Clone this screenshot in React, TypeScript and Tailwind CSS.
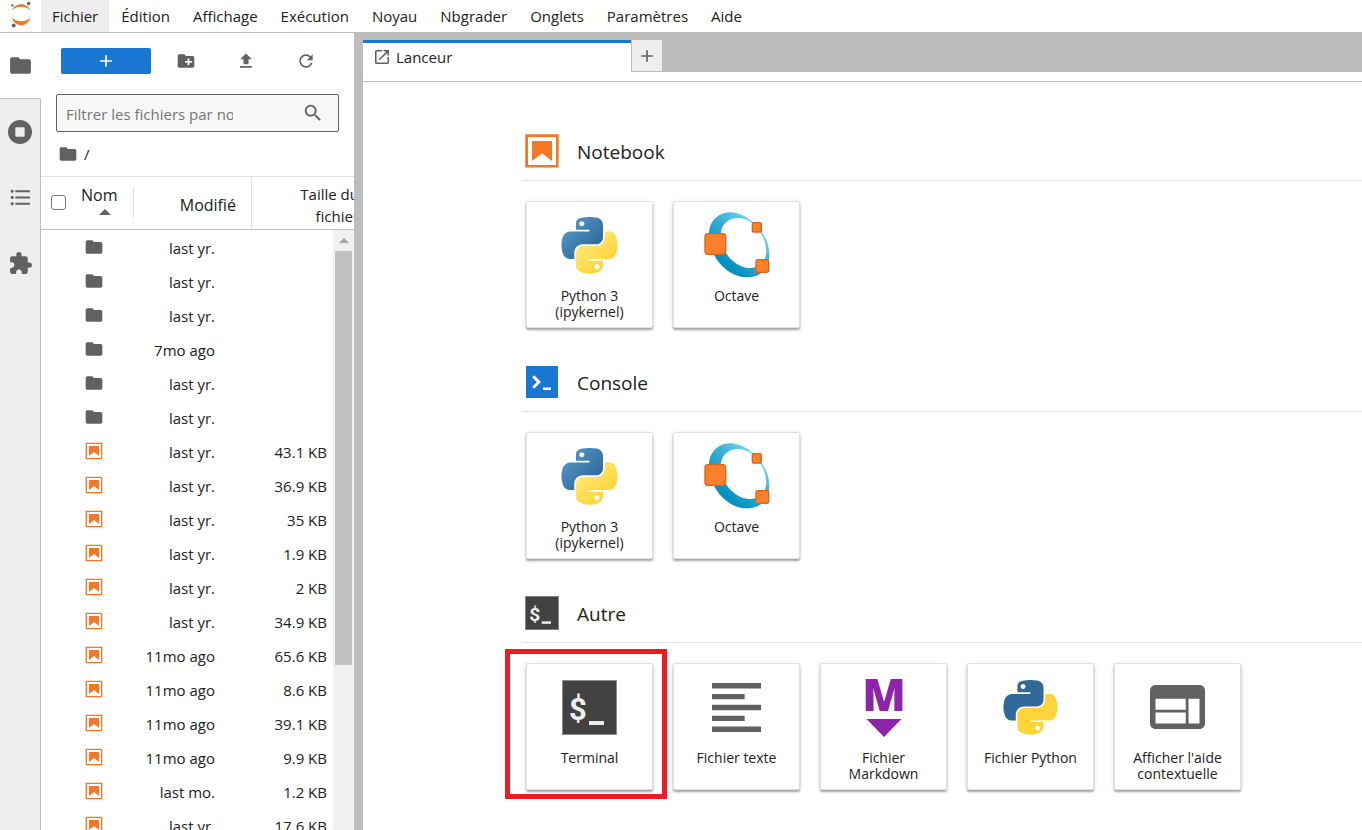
import type { ReactNode } from "react"
import {
  MdAdd,
  MdCreateNewFolder,
  MdExtension,
  MdFileUpload,
  MdFolder,
  MdFormatListBulleted,
  MdRefresh,
  MdSearch,
} from "react-icons/md"

const menus = [
  "Fichier",
  "Édition",
  "Affichage",
  "Exécution",
  "Noyau",
  "Nbgrader",
  "Onglets",
  "Paramètres",
  "Aide",
]

type FileRow = { kind: "folder" | "notebook"; modified: string; size?: string }

const files: FileRow[] = [
  { kind: "folder", modified: "last yr." },
  { kind: "folder", modified: "last yr." },
  { kind: "folder", modified: "last yr." },
  { kind: "folder", modified: "7mo ago" },
  { kind: "folder", modified: "last yr." },
  { kind: "folder", modified: "last yr." },
  { kind: "notebook", modified: "last yr.", size: "43.1 KB" },
  { kind: "notebook", modified: "last yr.", size: "36.9 KB" },
  { kind: "notebook", modified: "last yr.", size: "35 KB" },
  { kind: "notebook", modified: "last yr.", size: "1.9 KB" },
  { kind: "notebook", modified: "last yr.", size: "2 KB" },
  { kind: "notebook", modified: "last yr.", size: "34.9 KB" },
  { kind: "notebook", modified: "11mo ago", size: "65.6 KB" },
  { kind: "notebook", modified: "11mo ago", size: "8.6 KB" },
  { kind: "notebook", modified: "11mo ago", size: "39.1 KB" },
  { kind: "notebook", modified: "11mo ago", size: "9.9 KB" },
  { kind: "notebook", modified: "last mo.", size: "1.2 KB" },
  { kind: "notebook", modified: "last yr.", size: "17.6 KB" },
]

function JupyterLogo() {
  return (
    <svg viewBox="0 0 60 80" className="h-[27px] w-5" aria-hidden="true">
      <path d="M3 28C10 3 51 3 58 28C46 13 15 13 3 28z" fill="#f37726" />
      <path d="M3 49C15 64 46 64 58 49C51 80 10 80 3 49z" fill="#f37726" />
      <circle cx="4" cy="13" r="3.5" fill="#616161" />
      <circle cx="53" cy="7" r="5" fill="#616161" />
      <circle cx="8" cy="73" r="6" fill="#616161" />
    </svg>
  )
}

function NotebookIcon({ className }: { className: string }) {
  return (
    <svg viewBox="0 0 22 22" className={className} fill="#f37726" aria-hidden="true">
      <path d="M18.7 3.3v15.4H3.3V3.3h15.4m1.5-1.5H1.8v18.3h18.3l.1-18.3z" />
      <path d="M16.5 16.5l-5.4-4.3-5.6 4.3v-11h11z" />
    </svg>
  )
}

function ConsoleIcon() {
  return (
    <svg viewBox="0 0 200 200" className="size-10" aria-hidden="true">
      <path d="M20 20h160v160H20z" fill="#1976d2" />
      <path
        d="M105 127.3h40v12.8h-40zM51.1 77L74 99.9l-23.3 23.3 10.5 10.5 23.3-23.3L95 99.9 84.5 89.4 61.6 66.5z"
        fill="#fff"
      />
    </svg>
  )
}

function TerminalIcon({ className }: { className: string }) {
  return (
    <svg viewBox="0 0 55 55" className={className} aria-hidden="true">
      <path d="M.5 .5h54v54H.5z" fill="#424242" stroke="#8a8a8a" />
      <text
        x="7"
        y="40"
        fontSize="31"
        fontWeight="700"
        fontFamily="Roboto, sans-serif"
        fill="#eee"
      >
        $
      </text>
      <path d="M27 41h15v4H27z" fill="#eee" />
    </svg>
  )
}

function PythonIcon({ className, flat }: { className: string; flat?: boolean }) {
  return (
    <svg viewBox="13 2 102 104" className={className} aria-hidden="true">
      <defs>
        <linearGradient id="pyBlue" x1="0" y1="0" x2="0.8" y2="0.8">
          <stop offset="0" stopColor="#5a9fd4" />
          <stop offset="1" stopColor="#306998" />
        </linearGradient>
        <linearGradient id="pyYellow" x1="0.2" y1="0.2" x2="0.7" y2="0.8">
          <stop offset="0" stopColor="#ffe873" />
          <stop offset="1" stopColor="#ffd43b" />
        </linearGradient>
      </defs>
      <path
        fill={flat ? "#306998" : "url(#pyBlue)"}
        d="M63.391 1.988c-4.222.02-8.252.379-11.8 1.007-10.45 1.846-12.346 5.71-12.346 12.837v9.411h24.693v3.137H29.977c-7.176 0-13.46 4.313-15.426 12.521-2.268 9.405-2.368 15.275 0 25.096 1.755 7.311 5.947 12.519 13.124 12.519h8.491V67.234c0-8.151 7.051-15.34 15.426-15.34h24.665c6.866 0 12.346-5.654 12.346-12.548V15.833c0-6.693-5.646-11.72-12.346-12.837-4.244-.706-8.645-1.027-12.866-1.008zM50.037 9.557c2.55 0 4.634 2.117 4.634 4.721 0 2.593-2.083 4.69-4.634 4.69-2.56 0-4.633-2.097-4.633-4.69-.001-2.604 2.073-4.721 4.633-4.721z"
      />
      <path
        fill={flat ? "#ffd43b" : "url(#pyYellow)"}
        d="M91.682 28.38v10.966c0 8.5-7.208 15.655-15.426 15.655H51.591c-6.756 0-12.346 5.783-12.346 12.549v23.515c0 6.691 5.818 10.628 12.346 12.547 7.816 2.297 16.221 2.713 24.665 0 6.216-1.801 12.346-5.423 12.346-12.547v-9.412H63.938v-3.138h37.012c7.176 0 9.852-5.005 12.348-12.519 2.578-7.735 2.467-15.174 0-25.096-1.774-7.145-5.161-12.521-12.348-12.521h-9.268zM77.809 87.927c2.561 0 4.634 2.097 4.634 4.692 0 2.602-2.074 4.719-4.634 4.719-2.55 0-4.633-2.117-4.633-4.719 0-2.595 2.083-4.692 4.633-4.692z"
      />
    </svg>
  )
}

function OctaveIcon() {
  return (
    <svg viewBox="0 0 198 198" className="size-[66px]" aria-hidden="true">
      <defs>
        <linearGradient id="octRing" x1="0.9" y1="0.1" x2="0.3" y2="0.8">
          <stop offset="0" stopColor="#8be4f5" />
          <stop offset="0.5" stopColor="#3bb0d3" />
          <stop offset="1" stopColor="#0590c0" />
        </linearGradient>
      </defs>
      <path
        fillRule="evenodd"
        fill="url(#octRing)"
        d="M80 1C128 1 196 60 196 128C196 170 170 196 130 196C70 196 15 135 15 68C15 25 45 1 80 1zM105 18C68 18 50 40 50 72C50 120 95 168 136 168C166 168 187 150 187 118C187 66 142 18 105 18z"
      />
      <g fill="#ff7f2a" stroke="#d96416" strokeWidth="4">
        <rect x="3" y="65" width="62" height="62" rx="9" />
        <rect x="145" y="32" width="27" height="28" rx="4" />
        <rect x="156" y="143" width="38" height="38" rx="6" />
      </g>
    </svg>
  )
}

function TextIcon() {
  return (
    <svg viewBox="3 3 18 18" className="size-[49px]" fill="#616161" aria-hidden="true">
      <path d="M15 15H3v2h12v-2zm0-8H3v2h12V7zM3 13h18v-2H3v2zm0 8h18v-2H3v2zM3 3v2h18V3H3z" />
    </svg>
  )
}

function MarkdownIcon() {
  return (
    <svg viewBox="0 0 40 60" className="h-[60px] w-10" fill="#8e24aa" aria-hidden="true">
      <text
        x="20"
        y="34"
        textAnchor="middle"
        fontSize="45"
        fontWeight="800"
        fontFamily="'Open Sans', sans-serif"
      >
        M
      </text>
      <path d="M2.500 42h35L20 60z" />
    </svg>
  )
}

function HelpIcon() {
  return (
    <svg viewBox="2 4 20 16" className="h-11 w-[55px]" fill="#616161" aria-hidden="true">
      <path d="M20 4H4c-1.100 0-1.990.9-1.990 2L2 18c0 1.100.9 2 2 2h16c1.100 0 2-.9 2-2V6c0-1.100-.9-2-2-2zm-5 14H4v-4h11v4zm0-5H4V9h11v4zm5 5h-4V9h4v9z" />
    </svg>
  )
}

function LauncherIcon() {
  return (
    <svg viewBox="3 3 18 18" className="mb-0.5 size-[14px]" fill="#616161" aria-hidden="true">
      <path d="M19 19H5V5h7V3H5a2 2 0 00-2 2v14a2 2 0 002 2h14c1.100 0 2-.9 2-2v-7h-2v7zM14 3v2h3.590l-9.830 9.830 1.410 1.410L19 6.410V10h2V3h-7z" />
    </svg>
  )
}

function RunningIcon() {
  return (
    <svg viewBox="8 8 496 496" className="size-6" fill="currentColor" aria-hidden="true">
      <path d="M256 8C119 8 8 119 8 256s111 248 248 248 248-111 248-248S393 8 256 8zm96 328c0 8.800-7.200 16-16 16H176c-8.800 0-16-7.200-16-16V176c0-8.800 7.200-16 16-16h160c8.800 0 16 7.200 16 16v160z" />
    </svg>
  )
}

function MenuBar() {
  return (
    <header className="flex h-[33px] shrink-0 border-b border-[#bdbdbd] bg-white">
      <div className="flex w-[41px] shrink-0 justify-center pt-px">
        <JupyterLogo />
      </div>
      <nav className="flex gap-px">
        {menus.map((menu, i) => (
          <button
            key={menu}
            className={`px-[11px] ${i === 0 ? "bg-[#eeeeee]" : "hover:bg-[#eeeeee]"}`}
          >
            {menu}
          </button>
        ))}
      </nav>
    </header>
  )
}

function ActivityBar() {
  const tab = "flex h-[66px] w-full items-center justify-center border-r pb-px"
  return (
    <aside className="flex w-[41px] shrink-0 flex-col bg-[#eeeeee] text-[#616161]">
      <button aria-label="Fichiers" className={`${tab} border-b border-r-white border-b-[#bdbdbd] bg-white`}>
        <MdFolder className="size-[25px]" />
      </button>
      <button aria-label="Noyaux actifs" className={`${tab} border-[#bdbdbd]`}>
        <RunningIcon />
      </button>
      <button aria-label="Table des matières" className={`${tab} border-[#bdbdbd]`}>
        <MdFormatListBulleted className="size-[25px]" />
      </button>
      <button aria-label="Extensions" className={`${tab} border-[#bdbdbd]`}>
        <MdExtension className="size-[25px]" />
      </button>
      <div className="flex-1 border-r border-[#bdbdbd]" />
    </aside>
  )
}

function FileTable() {
  return (
    <div className="relative min-h-0 flex-1 overflow-hidden border-t border-[#e0e0e0]">
      <table className="w-full table-fixed border-separate border-spacing-0">
        <colgroup>
          <col className="w-[93px]" />
          <col className="w-[118px]" />
          <col />
        </colgroup>
        <thead>
          <tr className="h-[53px]">
            <th className="border-b border-[#bdbdbd] p-0 font-medium">
              <div className="flex h-[30px] items-center border-r border-[#e0e0e0] pl-2.5">
                <input
                  type="checkbox"
                  aria-label="Tout sélectionner"
                  className="mb-0.5 size-[15px] appearance-none rounded-[3px] border border-[#767676] bg-white"
                />
                <button className="flex flex-col items-center pb-1.5 pl-[15px] text-base leading-5">
                  <span>Nom</span>
                  <svg viewBox="0 0 12 6" className="mt-1 ml-3 h-1.5 w-3" fill="#616161" aria-hidden="true">
                    <path d="M0 6L6 0l6 6z" />
                  </svg>
                </button>
              </div>
            </th>
            <th className="border-r border-b border-r-[#e0e0e0] border-b-[#bdbdbd] p-0 pt-1 pr-[15px] text-right text-base font-medium">
              Modifié
            </th>
            <th className="border-b border-[#bdbdbd] p-0 pt-1 font-medium">
              <div className="w-[107px] text-right leading-[22px]">
                Taille du
                <br />
                fichier
              </div>
            </th>
          </tr>
        </thead>
        <tbody>
          {files.map((file, i) => (
            <tr key={i} className="h-[34px]">
              <td className="p-0 pl-[43px] text-[#616161]">
                {file.kind === "folder" ? (
                  <MdFolder className="size-5" />
                ) : (
                  <NotebookIcon className="size-5" />
                )}
              </td>
              <td className="p-0 pt-0.5 pr-[37px] text-right">{file.modified}</td>
              <td className="p-0 pt-0.5 pr-[27px] text-right">{file.size}</td>
            </tr>
          ))}
        </tbody>
      </table>
      {/* Scrollbar over the right edge of the rows */}
      <div className="absolute top-[53px] right-0 bottom-0 flex w-[21px] flex-col items-center bg-[#f1f1f1]">
        <div className="flex h-[21px] shrink-0 items-center">
          <svg viewBox="0 0 10 5" className="h-[5px] w-2.5" fill="#a3a3a3" aria-hidden="true">
            <path d="M0 5l5-5 5 5z" />
          </svg>
        </div>
        <div className="h-[69%] w-[17px] bg-[#c1c1c1]" />
      </div>
    </div>
  )
}

function FileBrowser() {
  const tool = "flex w-[60px] items-center justify-center"
  return (
    <section className="flex w-[313px] shrink-0 flex-col bg-white text-[#212121]">
      <div className="mt-[15px] flex h-[26px] pl-5 text-[#616161]">
        <button
          aria-label="Nouveau lanceur"
          className="mr-[5px] flex w-[90px] items-center justify-center rounded-xs bg-[#1976d2] text-white"
        >
          <MdAdd className="size-5" />
        </button>
        <button aria-label="Nouveau dossier" className={tool}>
          <MdCreateNewFolder className="size-5" />
        </button>
        <button aria-label="Téléverser" className={tool}>
          <MdFileUpload className="size-5" />
        </button>
        <button aria-label="Rafraîchir" className={tool}>
          <MdRefresh className="size-5" />
        </button>
      </div>
      <label className="mx-[15px] mt-5 flex h-[38px] items-center rounded-xs border border-[#616161] bg-[#f7f7f7] pl-[9px]">
        <input
          type="text"
          aria-label="Filtrer les fichiers par nom"
          placeholder="Filtrer les fichiers par nom"
          className="w-[167px] bg-transparent pt-0.5 outline-none placeholder:text-[#757575]"
        />
        <MdSearch className="mr-[14px] ml-auto size-[22px] text-[#616161]" />
      </label>
      <div className="flex h-11 items-center gap-1.5 pl-[17px]">
        <MdFolder className="size-5 text-[#616161]" />
        <a href="#">/</a>
      </div>
      <FileTable />
    </section>
  )
}

type CardProps = { icon: ReactNode; label: string; marked?: boolean }

function Card({ icon, label, marked }: CardProps) {
  return (
    <div className="relative">
      <button className="flex size-[127px] flex-col items-center rounded-xs border border-[#e0e0e0] bg-white shadow-[0_2px_2px_rgba(0,0,0,0.3),0_1px_5px_rgba(0,0,0,0.12)]">
        <span className="flex h-[86px] shrink-0 items-center justify-center">{icon}</span>
        <span className="w-[104px] text-sm leading-4">{label}</span>
      </button>
      {marked && (
        <div className="pointer-events-none absolute -top-3.5 -left-[21px] h-[150px] w-[162px] border-5 border-[#ed1c24]" />
      )}
    </div>
  )
}

type SectionProps = { title: string; icon: ReactNode; cards: CardProps[] }

function Section({ title, icon, cards }: SectionProps) {
  return (
    <section className="mb-[25px]">
      <h2 className="flex h-[59px] items-center border-b border-[#e0e0e0] text-[19px]">
        <span className="flex w-10 items-center justify-center">{icon}</span>
        <span className="pt-0.5 pl-[15px]">{title}</span>
      </h2>
      <div className="flex flex-wrap gap-5 pt-5 pl-1">
        {cards.map((card) => (
          <Card key={card.label} {...card} />
        ))}
      </div>
    </section>
  )
}

const kernels: CardProps[] = [
  { icon: <PythonIcon className="size-[57px]" />, label: "Python 3 (ipykernel)" },
  { icon: <OctaveIcon />, label: "Octave" },
]

const others: CardProps[] = [
  { icon: <TerminalIcon className="size-[55px]" />, label: "Terminal", marked: true },
  { icon: <TextIcon />, label: "Fichier texte" },
  { icon: <MarkdownIcon />, label: "Fichier Markdown" },
  { icon: <PythonIcon flat className="size-[55px]" />, label: "Fichier Python" },
  { icon: <HelpIcon />, label: "Afficher l'aide contextuelle" },
]

function Launcher() {
  return (
    <main className="flex min-w-0 flex-1 flex-col bg-white">
      <div className="flex h-[39px] shrink-0 items-end bg-[#bdbdbd]">
        <button className="flex h-8 w-[268px] items-center gap-[7px] border-t-3 border-[#1976d2] bg-white pl-3">
          <LauncherIcon />
          Lanceur
        </button>
        <button
          aria-label="Nouvel onglet"
          className="mb-px ml-px flex h-[31px] w-[30px] items-center justify-center bg-[#eeeeee] text-[#616161]"
        >
          <MdAdd className="size-5" />
        </button>
      </div>
      <div className="h-2.5 shrink-0 border-b border-[#bdbdbd] shadow-xs" />
      <div className="min-h-0 flex-1 overflow-hidden pt-10 pl-[159px]">
        <Section title="Notebook" icon={<NotebookIcon className="size-10" />} cards={kernels} />
        <Section title="Console" icon={<ConsoleIcon />} cards={kernels} />
        <Section title="Autre" icon={<TerminalIcon className="size-[34px]" />} cards={others} />
      </div>
    </main>
  )
}

export default function App() {
  return (
    <div className="flex h-screen flex-col overflow-hidden bg-white font-['Open_Sans','Noto_Sans',sans-serif] text-[15px] text-[#212121]">
      <MenuBar />
      <div className="flex min-h-0 flex-1">
        <ActivityBar />
        <FileBrowser />
        <div className="w-[9px] shrink-0 bg-[#bdbdbd]" />
        <Launcher />
      </div>
    </div>
  )
}
